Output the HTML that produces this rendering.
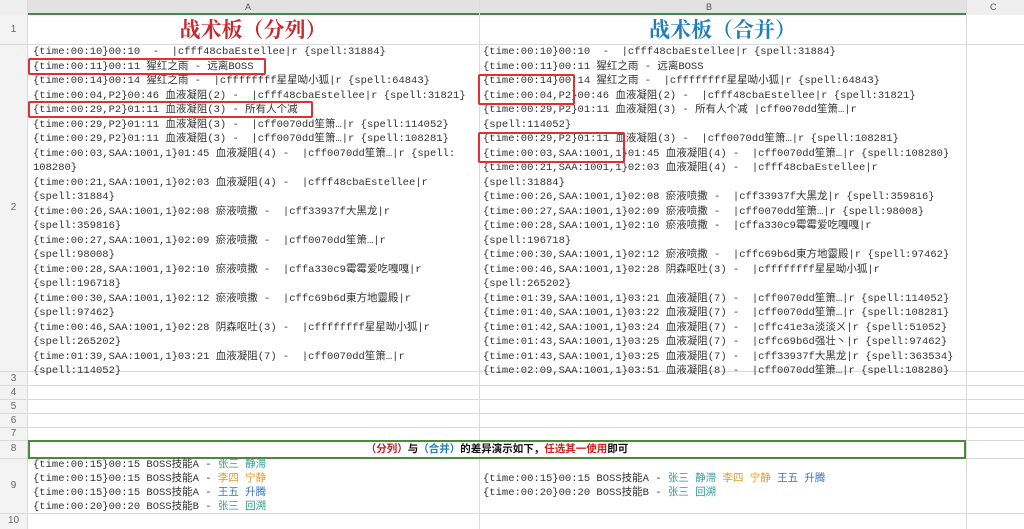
<!DOCTYPE html>
<html><head><meta charset="utf-8"><style>
*{margin:0;padding:0;box-sizing:border-box}
body{width:1024px;height:529px;overflow:hidden;background:#fff;position:relative;font-family:"Liberation Mono","Noto Sans CJK SC",monospace;font-size:10.5px;color:#333}
.a{position:absolute}
.hl{position:absolute;height:1px;background:#dadada;left:0;width:1024px}
.vl{position:absolute;width:1px;background:#dadada;top:0;height:529px}
.rn{position:absolute;left:0;width:27px;text-align:center;font-family:"Liberation Sans",sans-serif;font-size:10px;color:#666}
.ln{position:absolute;white-space:pre;line-height:14.5px}
.box{position:absolute;border:2px solid #e03030;border-radius:2px}
.t{color:#2e9a96}.o{color:#e09a30}.b{color:#3a6fc0}
</style></head><body>
<div class="a" style="left:0;top:0;width:1024px;height:15px;background:#efefef"></div>
<div class="a" style="left:27px;top:0;width:939px;height:15px;background:#e2e2e2;border-bottom:2px solid #3d8a4a"></div>
<div class="a" style="left:0;top:15px;width:27px;height:514px;background:#f3f3f3"></div>
<div class="a" style="left:245px;top:2px;font-family:'Liberation Sans',sans-serif;font-size:9px;color:#555">A</div>
<div class="a" style="left:706px;top:2px;font-family:'Liberation Sans',sans-serif;font-size:9px;color:#555">B</div>
<div class="a" style="left:990px;top:2px;font-family:'Liberation Sans',sans-serif;font-size:9px;color:#555">C</div>
<div class="vl" style="left:27px"></div><div class="vl" style="left:479px"></div><div class="vl" style="left:966px"></div>
<div class="hl" style="top:44px"></div><div class="hl" style="top:371px"></div><div class="hl" style="top:385px"></div><div class="hl" style="top:399px"></div><div class="hl" style="top:413px"></div><div class="hl" style="top:427px"></div><div class="hl" style="top:440px"></div><div class="hl" style="top:458px"></div><div class="hl" style="top:513px"></div>
<div class="rn" style="top:24px">1</div><div class="rn" style="top:202px">2</div><div class="rn" style="top:373px">3</div><div class="rn" style="top:387px">4</div><div class="rn" style="top:401px">5</div><div class="rn" style="top:415px">6</div><div class="rn" style="top:428px">7</div><div class="rn" style="top:443px">8</div><div class="rn" style="top:480px">9</div><div class="rn" style="top:515px">10</div>
<div class="a" style="left:27px;top:17px;width:452px;text-align:center;font-family:'Liberation Serif','Noto Serif CJK SC',serif;font-weight:bold;font-size:21px;color:#c8282e;line-height:26px">战术板（分列）</div>
<div class="a" style="left:479px;top:17px;width:487px;text-align:center;font-family:'Liberation Serif','Noto Serif CJK SC',serif;font-weight:bold;font-size:21px;color:#1f7fb8;line-height:26px">战术板（合并）</div>
<div class="ln" style="left:33px;top:45px">{time:00:10}00:10  -  |cfff48cbaEstellee|r {spell:31884}
{time:00:11}00:11 猩红之雨 - 远离BOSS
{time:00:14}00:14 猩红之雨 -  |cffffffff星星呦小狐|r {spell:64843}
{time:00:04,P2}00:46 血液凝阻(2) -  |cfff48cbaEstellee|r {spell:31821}
{time:00:29,P2}01:11 血液凝阻(3) - 所有人个减
{time:00:29,P2}01:11 血液凝阻(3) -  |cff0070dd笙箫…|r {spell:114052}
{time:00:29,P2}01:11 血液凝阻(3) -  |cff0070dd笙箫…|r {spell:108281}
{time:00:03,SAA:1001,1}01:45 血液凝阻(4) -  |cff0070dd笙箫…|r {spell:
108280}
{time:00:21,SAA:1001,1}02:03 血液凝阻(4) -  |cfff48cbaEstellee|r
{spell:31884}
{time:00:26,SAA:1001,1}02:08 瘀液喷撒 -  |cff33937f大黑龙|r
{spell:359816}
{time:00:27,SAA:1001,1}02:09 瘀液喷撒 -  |cff0070dd笙箫…|r
{spell:98008}
{time:00:28,SAA:1001,1}02:10 瘀液喷撒 -  |cffa330c9霉霉爱吃嘎嘎|r
{spell:196718}
{time:00:30,SAA:1001,1}02:12 瘀液喷撒 -  |cffc69b6d東方地靈殿|r
{spell:97462}
{time:00:46,SAA:1001,1}02:28 阴森呕吐(3) -  |cffffffff星星呦小狐|r
{spell:265202}
{time:01:39,SAA:1001,1}03:21 血液凝阻(7) -  |cff0070dd笙箫…|r
{spell:114052}</div>
<div class="ln" style="left:483px;top:45px">{time:00:10}00:10  -  |cfff48cbaEstellee|r {spell:31884}
{time:00:11}00:11 猩红之雨 - 远离BOSS
{time:00:14}00:14 猩红之雨 -  |cffffffff星星呦小狐|r {spell:64843}
{time:00:04,P2}00:46 血液凝阻(2) -  |cfff48cbaEstellee|r {spell:31821}
{time:00:29,P2}01:11 血液凝阻(3) - 所有人个减 |cff0070dd笙箫…|r
{spell:114052}
{time:00:29,P2}01:11 血液凝阻(3) -  |cff0070dd笙箫…|r {spell:108281}
{time:00:03,SAA:1001,1}01:45 血液凝阻(4) -  |cff0070dd笙箫…|r {spell:108280}
{time:00:21,SAA:1001,1}02:03 血液凝阻(4) -  |cfff48cbaEstellee|r
{spell:31884}
{time:00:26,SAA:1001,1}02:08 瘀液喷撒 -  |cff33937f大黑龙|r {spell:359816}
{time:00:27,SAA:1001,1}02:09 瘀液喷撒 -  |cff0070dd笙箫…|r {spell:98008}
{time:00:28,SAA:1001,1}02:10 瘀液喷撒 -  |cffa330c9霉霉爱吃嘎嘎|r
{spell:196718}
{time:00:30,SAA:1001,1}02:12 瘀液喷撒 -  |cffc69b6d東方地靈殿|r {spell:97462}
{time:00:46,SAA:1001,1}02:28 阴森呕吐(3) -  |cffffffff星星呦小狐|r
{spell:265202}
{time:01:39,SAA:1001,1}03:21 血液凝阻(7) -  |cff0070dd笙箫…|r {spell:114052}
{time:01:40,SAA:1001,1}03:22 血液凝阻(7) -  |cff0070dd笙箫…|r {spell:108281}
{time:01:42,SAA:1001,1}03:24 血液凝阻(7) -  |cffc41e3a淡淡ㄨ|r {spell:51052}
{time:01:43,SAA:1001,1}03:25 血液凝阻(7) -  |cffc69b6d强壮丶|r {spell:97462}
{time:01:43,SAA:1001,1}03:25 血液凝阻(7) -  |cff33937f大黑龙|r {spell:363534}
{time:02:09,SAA:1001,1}03:51 血液凝阻(8) -  |cff0070dd笙箫…|r {spell:108280}</div>
<div class="box" style="left:28px;top:58px;width:238px;height:17px"></div>
<div class="box" style="left:28px;top:101px;width:285px;height:17px"></div>
<div class="box" style="left:478px;top:74px;width:97px;height:31px"></div>
<div class="box" style="left:478px;top:132px;width:147px;height:31px"></div>
<div class="a" style="left:28px;top:440px;width:938px;height:19px;border:2px solid #4a8a3a;text-align:center;font-family:'Liberation Sans','Noto Sans CJK SC',sans-serif;font-weight:bold;font-size:10.5px;line-height:15px;color:#111"><span style="color:#c02020">（分列）</span>与<span style="color:#1f7fb8">（合并）</span>的差异演示如下，<span style="color:#d02020">任选其一使用</span>即可</div>
<div class="ln" style="left:33px;top:458px;line-height:14px">{time:00:15}00:15 BOSS技能A - <span class="t">张三 静滞</span>
{time:00:15}00:15 BOSS技能A - <span class="o">李四 宁静</span>
{time:00:15}00:15 BOSS技能A - <span class="b">王五 升腾</span>
{time:00:20}00:20 BOSS技能B - <span class="t">张三 回溯</span></div>
<div class="ln" style="left:483px;top:472px;line-height:14px">{time:00:15}00:15 BOSS技能A - <span class="t">张三 静滞</span> <span class="o">李四 宁静</span> <span class="b">王五 升腾</span>
{time:00:20}00:20 BOSS技能B - <span class="t">张三 回溯</span></div>
</body></html>
